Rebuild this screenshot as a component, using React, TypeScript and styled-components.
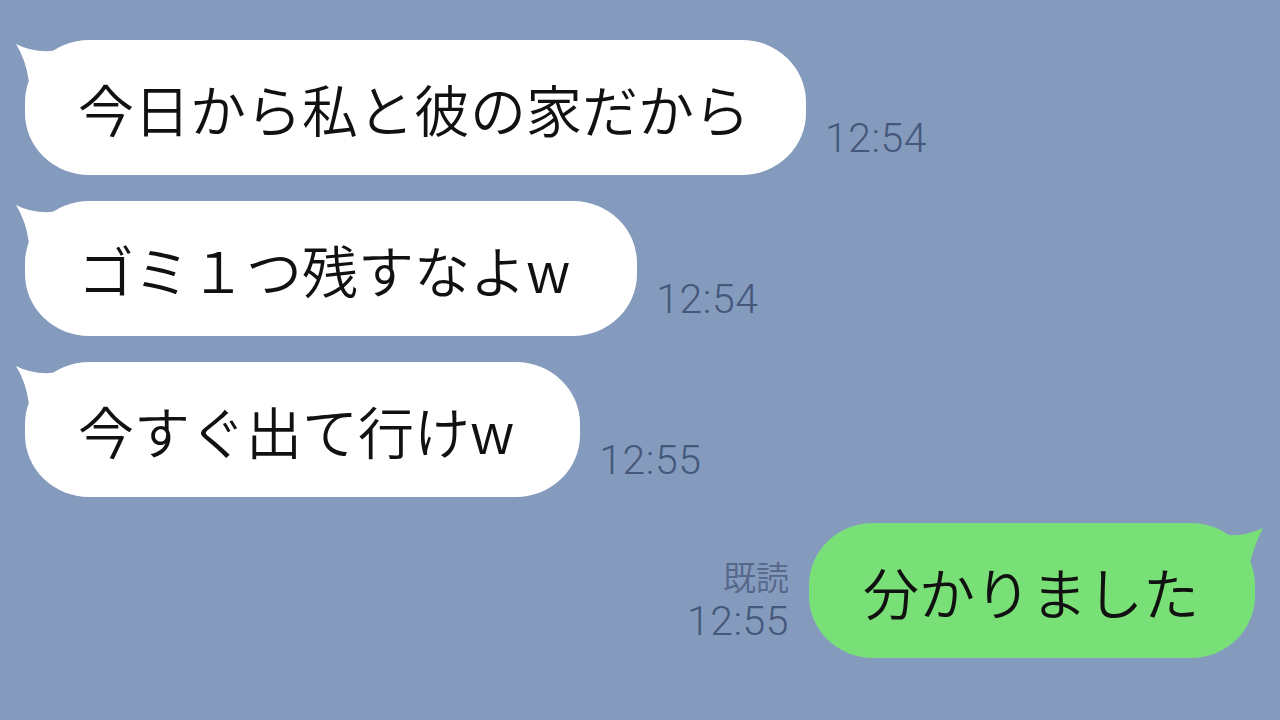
import React from "react";
import styled, { createGlobalStyle } from "styled-components";

const Global = createGlobalStyle`
  html, body { margin: 0; padding: 0; background: #859bbd; }
  body { width: 1280px; height: 720px; overflow: hidden; }
`;

const Screen = styled.div`
  width: 1280px;
  height: 720px;
  box-sizing: border-box;
  background: #859bbd;
  padding: 40px 25px 0 25px;
  display: flex;
  flex-direction: column;
  gap: 26px;
`;

const Row = styled.div<{ $mine?: boolean }>`
  display: flex;
  align-items: flex-end;
  justify-content: ${(p) => (p.$mine ? "flex-end" : "flex-start")};
  gap: ${(p) => (p.$mine ? "20px" : "19px")};
`;

const Bubble = styled.div<{ $mine?: boolean; $padRight: number }>`
  position: relative;
  height: 135px;
  box-sizing: border-box;
  padding-left: ${(p) => (p.$mine ? "54px" : "53px")};
  padding-right: ${(p) => p.$padRight}px;
  display: flex;
  align-items: center;
  border-radius: 64px / 62px;
  background: ${(p) => (p.$mine ? "#79e077" : "#ffffff")};
  font-family: "Noto Sans CJK JP", "Noto Sans", sans-serif;
  font-size: 56px;
  font-weight: 350;
  color: #111111;
  white-space: nowrap;
  line-height: 1;
`;

const Tail = styled.svg<{ $mine?: boolean }>`
  position: absolute;
  top: 0;
  width: 45px;
  height: 50px;
  overflow: visible;
  ${(p) => (p.$mine ? "right: -10px;" : "left: -10px;")}
`;

const Meta = styled.div`
  display: flex;
  flex-direction: column;
  align-items: flex-end;
  margin-bottom: 16px;
`;

const Read = styled.div`
  font-family: "Noto Sans CJK JP", "Noto Sans", sans-serif;
  font-size: 33px;
  font-weight: 350;
  line-height: 1;
  color: #56678a;
  margin-bottom: 8px;
`;

const Time = styled.div`
  font-family: Roboto, "Noto Sans", sans-serif;
  font-weight: 300;
  font-size: 41px;
  line-height: 1;
  color: #45587c;
  letter-spacing: 0.5px;
`;

type Msg = { text: string; time: string; mine?: boolean; pad: number };

const messages: Msg[] = [
  { text: "今日から私と彼の家だから", time: "12:54", pad: 56 },
  { text: "ゴミ１つ残すなよw", time: "12:54", pad: 67 },
  { text: "今すぐ出て行けw", time: "12:55", pad: 66 },
  { text: "分かりました", time: "12:55", mine: true, pad: 56 },
];

const LeftTail = () => (
  <Tail viewBox="-10 0 45 50">
    <path d="M -9 4 Q 10 14 35 10 L 35 50 L 4 50 L 4 42 Q 1 20 -9 4 Z" fill="#ffffff" />
  </Tail>
);

const RightTail = () => (
  <Tail $mine viewBox="-35 0 45 50">
    <path d="M 8 5 Q -10 14 -35 12 L -35 50 L -5 50 L -5 40 Q 0 20 8 5 Z" fill="#79e077" />
  </Tail>
);

export default function App() {
  return (
    <>
      <Global />
      <Screen>
        {messages.map((m, i) =>
          m.mine ? (
            <Row key={i} $mine>
              <Meta>
                <Read>既読</Read>
                <Time>{m.time}</Time>
              </Meta>
              <Bubble $mine $padRight={m.pad}>
                <RightTail />
                {m.text}
              </Bubble>
            </Row>
          ) : (
            <Row key={i}>
              <Bubble $padRight={m.pad}>
                <LeftTail />
                {m.text}
              </Bubble>
              <Meta>
                <Time>{m.time}</Time>
              </Meta>
            </Row>
          )
        )}
      </Screen>
    </>
  );
}
